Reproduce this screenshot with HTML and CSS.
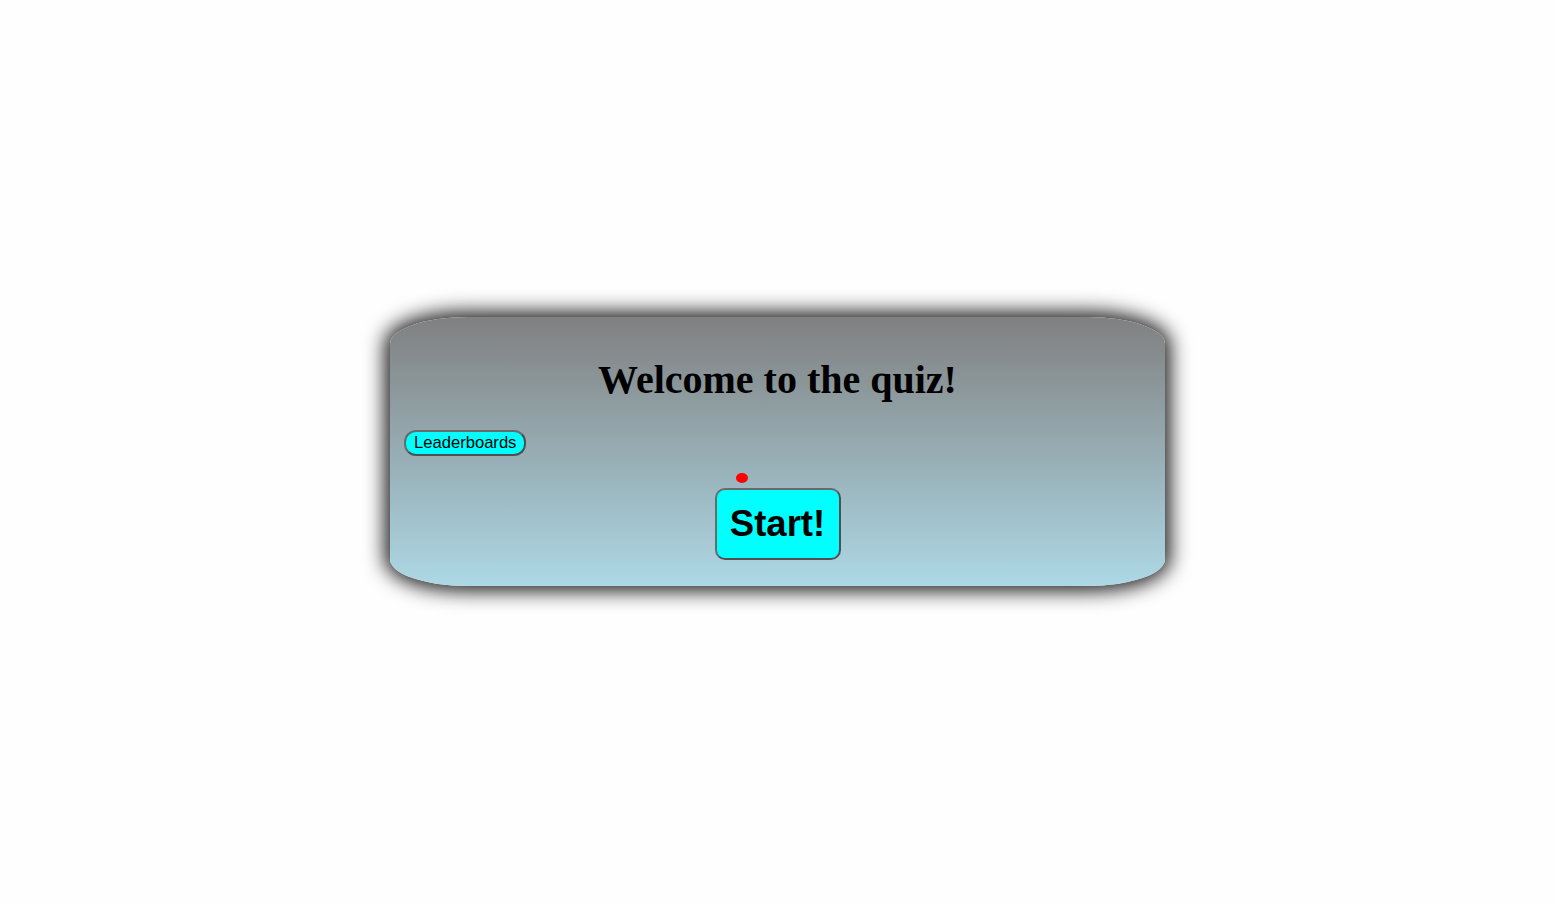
FILE: index.html
```html
<!DOCTYPE html>
<html>
<head>
<meta charset="utf-8">
<link rel="stylesheet" href="styles.css">
</head>
<body>
<div class="page">
  <div class="card">
    <h1 class="title">Welcome to the quiz!</h1>
    <div class="row">
      <button class="lb">Leaderboards</button>
    </div>
    <div class="start-wrap">
      <span class="dot"></span>
      <button class="start">Start!</button>
    </div>
  </div>
</div>
</body>
</html>
```
FILE: styles.css
```css
html, body {
  margin: 0;
  padding: 0;
  background: #fefefe;
}
.page {
  width: 1555px;
  height: 903px;
  display: flex;
  align-items: center;
  justify-content: center;
}
.card {
  width: 775px;
  height: 269px;
  box-sizing: border-box;
  border-radius: 10% / 10%;
  background: linear-gradient(#808080, #add8e6);
  box-shadow: 0 0 20px 5px rgba(0,0,0,0.9);
  display: flex;
  flex-direction: column;
  padding: 40px 14px 0 14px;
}
.title {
  margin: 0;
  text-align: center;
  font-family: "Liberation Serif", serif;
  font-weight: bold;
  font-size: 40px;
  line-height: 46px;
  color: #000;
}
.row {
  margin-top: 27px;
  display: flex;
}
.lb {
  font-family: "Liberation Sans", sans-serif;
  font-size: 16.6px;
  background: #00ffff;
  border: 2px solid #505050;
  border-top-color: #6a6a6a;
  border-left-color: #6a6a6a;
  border-radius: 12px;
  padding: 0 8px;
  height: 26px;
  color: #000;
}
.start-wrap {
  margin-top: 17px;
  display: flex;
  flex-direction: column;
  align-items: center;
}
.dot {
  width: 12px;
  height: 10px;
  border-radius: 50%;
  background: #ff0000;
  margin-left: -72px;
  margin-bottom: 5px;
}
.start {
  font-family: "Liberation Sans", sans-serif;
  font-weight: bold;
  font-size: 36.5px;
  background: #00ffff;
  border: 2px solid #505050;
  border-top-color: #6a6a6a;
  border-left-color: #6a6a6a;
  border-radius: 10px;
  width: 126px;
  height: 72px;
  padding: 0;
  color: #000;
}
```
